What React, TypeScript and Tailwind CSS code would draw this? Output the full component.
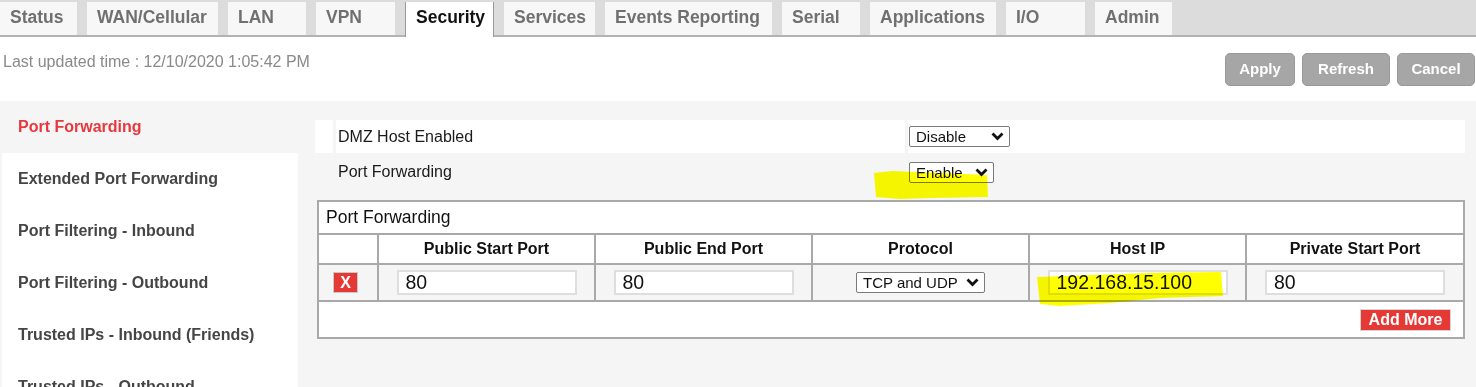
import React from 'react';

const tabs = [
  { label: 'Status', w: 'w-[77px]' },
  { label: 'WAN/Cellular', w: 'w-[131px]' },
  { label: 'LAN', w: 'w-[78px]' },
  { label: 'VPN', w: 'w-[79px]' },
  { label: 'Security', w: 'w-[89px]', active: true },
  { label: 'Services', w: 'w-[91px]' },
  { label: 'Events Reporting', w: 'w-[167px]' },
  { label: 'Serial', w: 'w-[78px]' },
  { label: 'Applications', w: 'w-[126px]' },
  { label: 'I/O', w: 'w-[79px]' },
  { label: 'Admin', w: 'w-[77px]' },
];

const menu = [
  'Port Forwarding',
  'Extended Port Forwarding',
  'Port Filtering - Inbound',
  'Port Filtering - Outbound',
  'Trusted IPs - Inbound (Friends)',
  'Trusted IPs - Outbound',
];

const Chevron = () => (
  <svg width="13" height="9" viewBox="0 0 13 9" className="shrink-0">
    <path d="M1.5 1.5 6.5 6.5 11.5 1.5" fill="none" stroke="#111" strokeWidth="2.8" />
  </svg>
);

const FakeSelect = ({ value, w, size }: { value: string; w: string; size: string }) => (
  <div className={`${w} ${size} flex items-center justify-between h-[21px] border border-[#7a7a7a] rounded-[2px] bg-white pl-[6px] pr-[5px] text-[#111] leading-none`}>
    <span>{value}</span>
    <Chevron />
  </div>
);

const TextBox = ({ value }: { value: string }) => (
  <div className="mx-auto w-[180px] h-[25px] border-2 border-[#dedede] bg-white pl-[7px] flex items-center text-[19.5px] text-[#111] leading-none">
    {value}
  </div>
);

const headers = ['Public Start Port', 'Public End Port', 'Protocol', 'Host IP', 'Private Start Port'];

export default function App() {
  return (
    <div className="relative w-[1476px] h-[387px] overflow-hidden bg-white font-['Liberation_Sans',Arial,sans-serif]">
      {/* top tabs */}
      <div className="flex h-[37px] pt-[2px] gap-[10px] bg-[#dcdcdc] border-b-2 border-[#b3b3b3]">
        {tabs.map(t => (
          <div
            key={t.label}
            className={
              t.active
                ? `${t.w} -mb-[2px] bg-white border-x border-[#9a9a9a] pl-[10px] pb-[5px] flex items-center text-[17.5px] font-bold text-[#111]`
                : `${t.w} bg-[#f7f7f7] pl-[10px] pb-[3px] flex items-center text-[17.5px] font-bold text-[#707070]`
            }
          >
            {t.label}
          </div>
        ))}
      </div>

      {/* status line + buttons */}
      <div className="h-[64px] flex justify-between items-start">
        <div className="pt-[13px] pl-[3px] text-[16px] text-[#8a8a8a]">Last updated time : 12/10/2020 1:05:42 PM</div>
        <div className="pt-[16px] pr-[1px] flex gap-[7px]">
          <button className="w-[70px] h-[33px] rounded-[5px] bg-[#a6a6a6] border border-[#999] text-white text-[15px] font-bold">Apply</button>
          <button className="w-[88px] h-[33px] rounded-[5px] bg-[#a6a6a6] border border-[#999] text-white text-[15px] font-bold">Refresh</button>
          <button className="w-[78px] h-[33px] rounded-[5px] bg-[#a6a6a6] border border-[#999] text-white text-[15px] font-bold">Cancel</button>
        </div>
      </div>

      {/* main */}
      <div className="flex h-[286px] bg-[#f5f5f5]">
        <div className="ml-[2px] w-[296px] bg-white">
          {menu.map((m, i) => (
            <div
              key={m}
              className={
                i === 0
                  ? 'h-[52px] pl-[16px] flex items-center bg-[#f5f5f5] text-[16px] font-bold text-[#e8383d]'
                  : 'h-[52px] pl-[16px] flex items-center text-[16px] font-bold text-[#454545]'
              }
            >
              {m}
            </div>
          ))}
        </div>

        <div className="flex-1 pl-[17px] pr-[11px] pt-[19px]">
          {/* DMZ row */}
          <div className="flex h-[33px] gap-[3px]">
            <div className="w-[18px] bg-white" />
            <div className="w-[569px] bg-white pl-[2px] flex items-center text-[16px] text-[#1a1a1a]">DMZ Host Enabled</div>
            <div className="flex-1 bg-white pl-[1px] flex items-center">
              <FakeSelect value="Disable" w="w-[101px]" size="text-[15px]" />
            </div>
          </div>
          {/* Port forwarding row */}
          <div className="flex h-[38px] gap-[3px]">
            <div className="w-[18px]" />
            <div className="w-[569px] pl-[2px] flex items-center text-[16px] text-[#1a1a1a]">Port Forwarding</div>
            <div className="flex-1 pl-[1px] flex items-center">
              <FakeSelect value="Enable" w="w-[85px]" size="text-[15px]" />
            </div>
          </div>

          {/* table */}
          <table className="mt-[9px] ml-[2px] w-[1148px] table-fixed border-collapse border-2 border-[#a9a9a9] text-[#111]">
            <colgroup>
              <col className="w-[60px]" />
              <col className="w-[217px]" />
              <col className="w-[217px]" />
              <col className="w-[217px]" />
              <col className="w-[217px]" />
              <col className="w-[218px]" />
            </colgroup>
            <tbody>
              <tr className="h-[33px] bg-white">
                <td colSpan={6} className="border-2 border-[#a9a9a9] pl-[7px] text-[17.5px]">Port Forwarding</td>
              </tr>
              <tr className="h-[30px] bg-white">
                <td className="border-2 border-[#a9a9a9]" />
                {headers.map(h => (
                  <td key={h} className="border-2 border-[#a9a9a9] text-center text-[16px] font-bold">{h}</td>
                ))}
              </tr>
              <tr className="h-[37px] bg-[#f5f5f5]">
                <td className="border-2 border-[#a9a9a9] pl-[14px]">
                  <div className="w-[25px] h-[21px] bg-[#e53935] border border-[#c9c9c9] flex items-center justify-center text-white text-[16px] font-bold leading-none">X</div>
                </td>
                <td className="border-2 border-[#a9a9a9]"><TextBox value="80" /></td>
                <td className="border-2 border-[#a9a9a9]"><TextBox value="80" /></td>
                <td className="border-2 border-[#a9a9a9]">
                  <div className="flex justify-center">
                    <FakeSelect value="TCP and UDP" w="w-[129px]" size="text-[15px]" />
                  </div>
                </td>
                <td className="border-2 border-[#a9a9a9]"><TextBox value="192.168.15.100" /></td>
                <td className="border-2 border-[#a9a9a9]"><TextBox value="80" /></td>
              </tr>
              <tr className="h-[37px] bg-white">
                <td colSpan={6} className="border-2 border-[#a9a9a9] pr-[12px]">
                  <div className="flex justify-end">
                    <button className="w-[91px] h-[22px] bg-[#e53935] border border-[#d5d5d5] text-white text-[16px] font-bold leading-none">Add More</button>
                  </div>
                </td>
              </tr>
            </tbody>
          </table>
        </div>
      </div>

      {/* highlighter annotations */}
      <svg className="pointer-events-none absolute left-0 top-0 mix-blend-multiply" width="1476" height="387" viewBox="0 0 1476 387">
        <path d="M874 173 L892 171 L987 175 L988 197 L930 198 L900 199 L876 197 Z" fill="#ffff00" />
        <path d="M1037 277 L1150 273 L1221 272 L1223 296 L1160 298 L1110 303 L1060 306 L1040 304 Z" fill="#ffff00" />
      </svg>
    </div>
  );
}
